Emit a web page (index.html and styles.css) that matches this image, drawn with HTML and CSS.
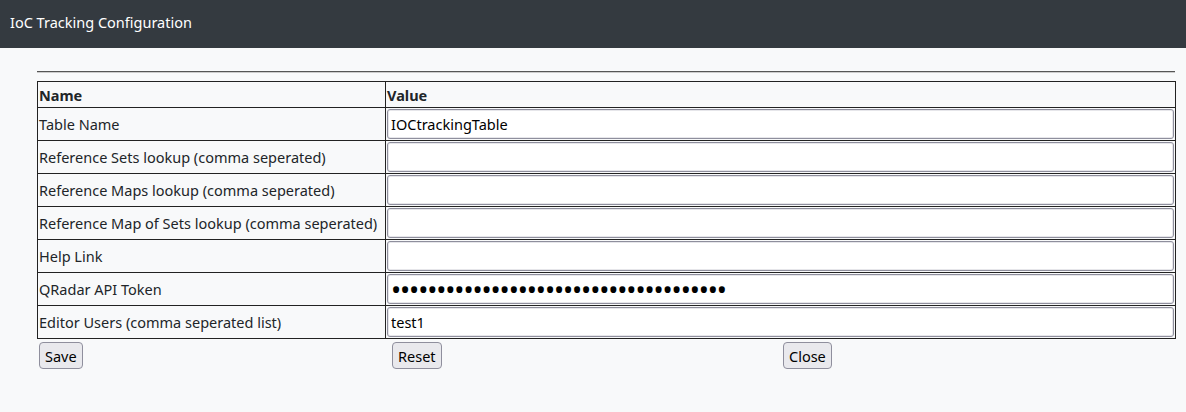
FILE: index.html
```html
<!DOCTYPE html>
<html lang="en">
<head>
    <meta charset="UTF-8">
    <meta name="viewport" content="width=device-width, initial-scale=1.0">
    <title>IoC Tracking Configuration</title>
    <link rel="stylesheet" href="styles.css">
</head>
<body>
    <div class="topbar">IoC Tracking Configuration</div>
    <form class="config">
        <hr class="rule">
        <table class="settings">
            <tr>
                <th class="col-name">Name</th>
                <th>Value</th>
            </tr>
            <tr>
                <td>Table Name</td>
                <td><input type="text" class="field" value="IOCtrackingTable"></td>
            </tr>
            <tr>
                <td>Reference Sets lookup (comma seperated)</td>
                <td><input type="text" class="field" value=""></td>
            </tr>
            <tr>
                <td>Reference Maps lookup (comma seperated)</td>
                <td><input type="text" class="field" value=""></td>
            </tr>
            <tr>
                <td>Reference Map of Sets lookup (comma seperated)</td>
                <td><input type="text" class="field" value=""></td>
            </tr>
            <tr>
                <td>Help Link</td>
                <td><input type="text" class="field" value=""></td>
            </tr>
            <tr>
                <td>QRadar API Token</td>
                <td><input type="password" class="field secret" value="abcdefghijklmnopqrstuvwxyz0123456789a"></td>
            </tr>
            <tr>
                <td>Editor Users (comma seperated list)</td>
                <td><input type="text" class="field" value="test1"></td>
            </tr>
        </table>
        <div class="actions">
            <div><input type="button" class="btn" value="Save"></div>
            <div><input type="reset" class="btn" value="Reset"></div>
            <div><input type="button" class="btn" value="Close"></div>
        </div>
    </form>
</body>
</html>
```

FILE: styles.css
```css
body {
    margin: 0;
    background-color: #f8f9fa;
    font-family: "Noto Sans", "Open Sans", sans-serif;
    font-size: 14.5px;
    color: #212529;
}
.topbar {
    height: 48px;
    line-height: 45px;
    padding-left: 10px;
    background-color: #343a40;
    color: #ffffff;
    font-size: 14.5px;
}
.config {
    margin: 0 10px 0 37px;
    padding-top: 23px;
}
.rule {
    margin: 0 1px 8px 0;
    border: 0;
    border-top: 1px solid #555;
    border-bottom: 1px solid #ccc;
}
.settings {
    width: 100%;
    border-collapse: collapse;
    border: 1px solid #222;
}
.settings th,
.settings td {
    border: 1px solid #222;
    padding: 1px;
    text-align: left;
    white-space: nowrap;
}
.settings th {
    height: 23px;
    font-weight: bold;
}
.settings td {
    height: 30px;
}
.col-name {
    width: 345px;
}
.field {
    box-sizing: border-box;
    width: 100%;
    height: 30px;
    margin: 0;
    padding: 0 3px;
    border: 1px solid #8f8f9d;
    border-radius: 3px;
    box-shadow: inset 0 0 0 1px #e6e6ea;
    background-color: #fff;
    font-family: inherit;
    font-size: 14.5px;
    color: #000;
    display: block;
}
.secret {
    font-size: 27px;
    letter-spacing: -1.1px;
}
.actions {
    display: grid;
    grid-template-columns: 353px 391px 1fr;
    padding-top: 3px;
}
.actions div {
    padding-left: 2px;
}
.btn {
    height: 27px;
    padding: 0 5px;
    border: 1px solid #8f8f9d;
    border-radius: 4px;
    background-color: #e9e9ed;
    font-family: inherit;
    font-size: 14.5px;
    color: #000;
}
```
